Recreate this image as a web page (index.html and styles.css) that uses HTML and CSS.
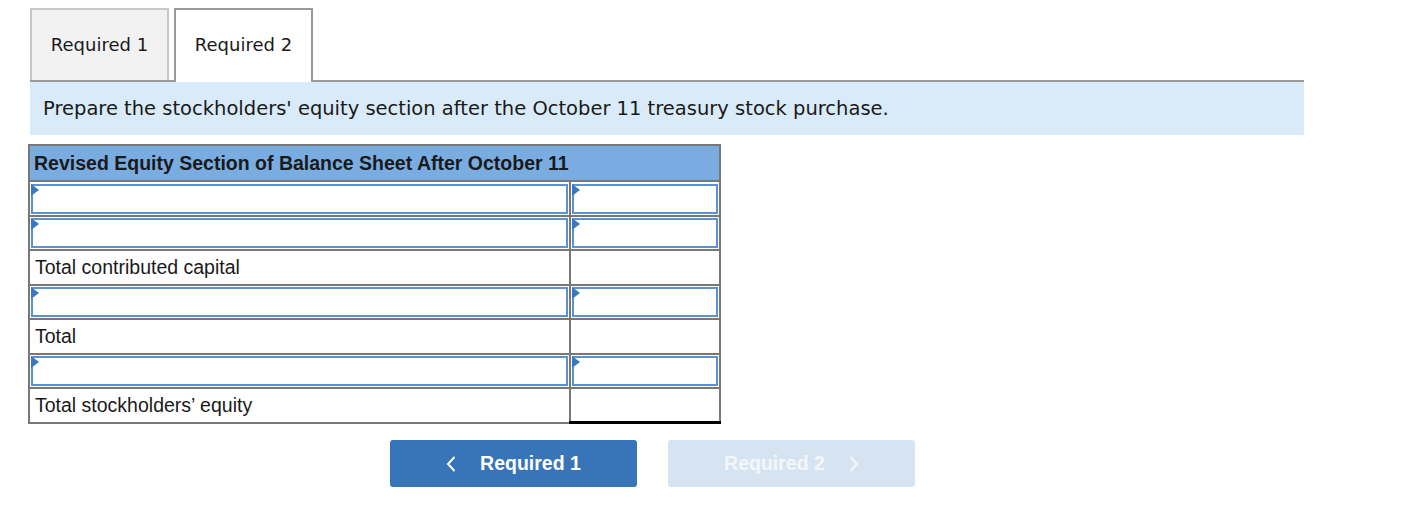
FILE: index.html
```html
<!DOCTYPE html>
<html>
<head>
<meta charset="utf-8">
<link rel="stylesheet" href="styles.css">
</head>
<body>
<div class="page">
  <div class="tabs">
    <div class="tab tab-inactive">Required 1</div>
    <div class="tab tab-active">Required 2</div>
  </div>
  <div class="instruction">Prepare the stockholders' equity section after the October 11 treasury stock purchase.</div>
  <table class="sheet">
    <tr><th colspan="2">Revised Equity Section of Balance Sheet After October 11</th></tr>
    <tr class="row-a">
      <td class="lbl"><div class="inp"><span class="flag"></span></div></td>
      <td class="amt"><div class="inp"><span class="flag"></span></div></td>
    </tr>
    <tr class="row-b">
      <td class="lbl"><div class="inp"><span class="flag"></span></div></td>
      <td class="amt"><div class="inp"><span class="flag"></span></div></td>
    </tr>
    <tr class="row-a">
      <td class="lbl text">Total contributed capital</td>
      <td class="amt total"></td>
    </tr>
    <tr class="row-b">
      <td class="lbl"><div class="inp"><span class="flag"></span></div></td>
      <td class="amt"><div class="inp"><span class="flag"></span></div></td>
    </tr>
    <tr class="row-a">
      <td class="lbl text">Total</td>
      <td class="amt total"></td>
    </tr>
    <tr class="row-b">
      <td class="lbl"><div class="inp"><span class="flag"></span></div></td>
      <td class="amt"><div class="inp"><span class="flag"></span></div></td>
    </tr>
    <tr class="row-c">
      <td class="lbl text">Total stockholders’ equity</td>
      <td class="amt total grand"></td>
    </tr>
  </table>
  <div class="nav">
    <button class="btn btn-prev"><svg class="chev chev-l" width="10" height="16" viewBox="0 0 10 16"><polyline points="8.5,1 2,8 8.5,15" fill="none" stroke="#ffffff" stroke-width="2"/></svg>Required 1</button>
    <button class="btn btn-next">Required 2<svg class="chev chev-r" width="10" height="16" viewBox="0 0 10 16"><polyline points="1.5,1 8,8 1.5,15" fill="none" stroke="#f2f7fc" stroke-width="2"/></svg></button>
  </div>
</div>
</body>
</html>
```
FILE: styles.css
```css
html, body {
  margin: 0;
  padding: 0;
  background: #ffffff;
}
.page {
  padding: 8px 0 0 30px;
  width: 1274px;
}
.tabs {
  display: flex;
  gap: 5px;
  height: 72px;
  border-bottom: 2px solid #9a9a9a;
}
.tab {
  box-sizing: border-box;
  width: 139px;
  display: flex;
  align-items: center;
  justify-content: center;
  padding-bottom: 2px;
  font-family: "DejaVu Sans", Verdana, sans-serif;
  font-size: 18px;
  color: #1a1a1a;
  border: 2px solid #c8c8c8;
  border-bottom: none;
}
.tab-inactive {
  background: #f2f2f2;
  height: 72px;
}
.tab-active {
  background: #ffffff;
  border-color: #9a9a9a;
  height: 74px;
  padding-bottom: 4px;
  position: relative;
  z-index: 1;
}
.instruction {
  height: 53px;
  box-sizing: border-box;
  background: #d9eaf8;
  padding-left: 13px;
  display: flex;
  align-items: center;
  font-family: "DejaVu Sans", Verdana, sans-serif;
  font-size: 19.5px;
  color: #1a1a1a;
}
.sheet {
  margin: 9px 0 0 -2px;
  border-collapse: collapse;
  width: 693px;
  border: 2px solid #787878;
  font-family: "Liberation Sans", Arial, sans-serif;
  font-size: 19.5px;
  color: #1a1a1a;
}
.sheet th {
  background: #79ade2;
  text-align: left;
  font-weight: bold;
  height: 34px;
  padding: 0 0 0 4px;
  border: 2px solid #787878;
}
.sheet td {
  border: 2px solid #787878;
  padding: 0;
}
.row-a td { height: 33px; }
.row-b td { height: 32px; }
.row-c td { height: 32px; }
.lbl { width: 534px; }
.text { padding-left: 5px !important; }
.inp {
  position: relative;
  box-sizing: border-box;
  height: 30px;
  margin: 1px;
  border: 2px solid #5a92d4;
  background: #ffffff;
}
.flag {
  position: absolute;
  left: -2px;
  top: -2px;
  width: 0;
  height: 0;
  border-top: 6px solid transparent;
  border-bottom: 6px solid transparent;
  border-left: 8px solid #3a78c2;
}
.total {
  border-top: 2px solid #000000 !important;
}
.grand {
  border-bottom: 3px solid #000000 !important;
}
.nav {
  display: flex;
  gap: 31px;
  margin: 16px 0 0 360px;
}
.btn {
  box-sizing: border-box;
  width: 247px;
  height: 47px;
  border: none;
  border-radius: 3px;
  font-family: "Liberation Sans", Arial, sans-serif;
  font-weight: bold;
  font-size: 19.5px;
  color: #ffffff;
  display: flex;
  align-items: center;
  justify-content: center;
  padding: 0;
}
.btn-prev {
  background: #3775b8;
}
.btn-next {
  background: #d6e4f2;
  color: #f2f7fc;
}
.chev-l {
  margin-right: 24px;
}
.chev-r {
  margin-left: 24px;
}
```
